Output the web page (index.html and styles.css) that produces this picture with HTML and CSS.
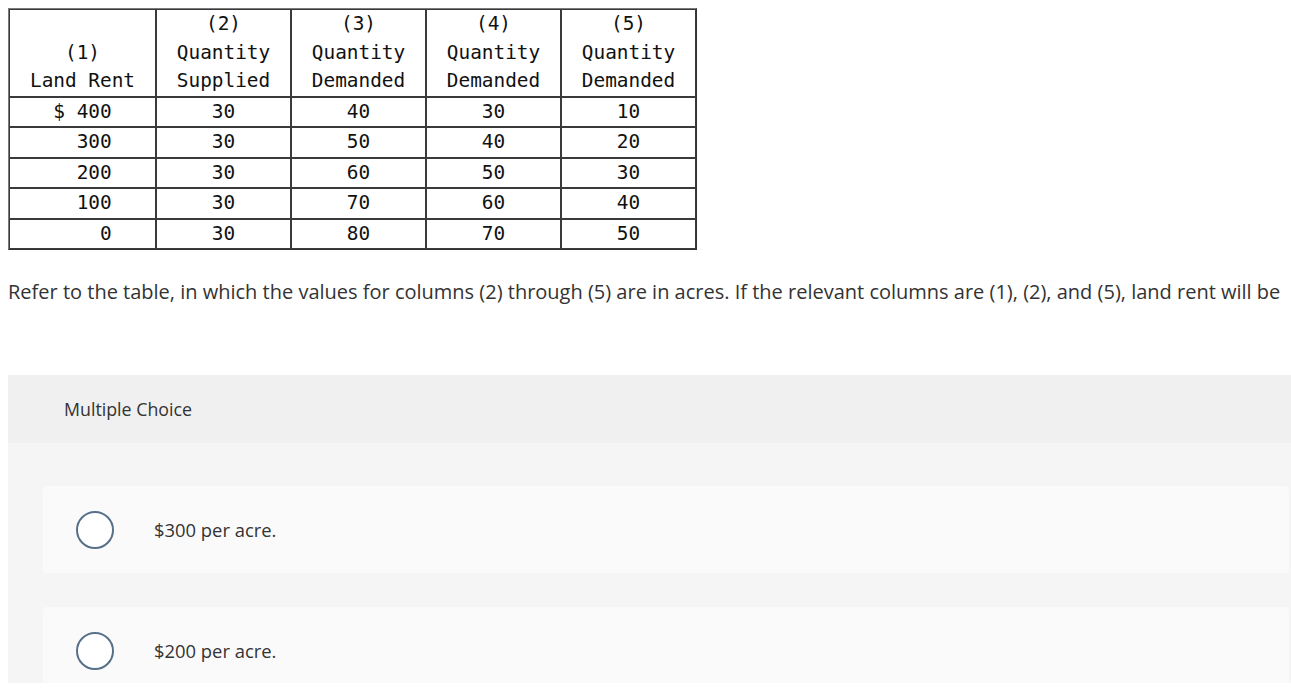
FILE: index.html
```html
<!DOCTYPE html>
<html>
<head>
<meta charset="utf-8">
<link rel="stylesheet" href="styles.css">
</head>
<body>
<table class="data">
  <tr class="head">
    <td class="c1"><br>(1)<br>Land Rent</td>
    <td class="cn">(2)<br>Quantity<br>Supplied</td>
    <td class="cn">(3)<br>Quantity<br>Demanded</td>
    <td class="cn">(4)<br>Quantity<br>Demanded</td>
    <td class="cn">(5)<br>Quantity<br>Demanded</td>
  </tr>
  <tr><td class="pre">$ 400</td><td>30</td><td>40</td><td>30</td><td>10</td></tr>
  <tr><td class="pre">  300</td><td>30</td><td>50</td><td>40</td><td>20</td></tr>
  <tr><td class="pre">  200</td><td>30</td><td>60</td><td>50</td><td>30</td></tr>
  <tr><td class="pre">  100</td><td>30</td><td>70</td><td>60</td><td>40</td></tr>
  <tr><td class="pre">    0</td><td>30</td><td>80</td><td>70</td><td>50</td></tr>
</table>

<p class="question">Refer to the table, in which the values for columns (2) through (5) are in acres. If the relevant columns are (1), (2), and (5), land rent will be</p>

<section class="mc">
  <div class="mc-head">Multiple Choice</div>
  <div class="mc-body">
    <div class="choice"><span class="radio"></span><span class="label">$300 per acre.</span></div>
    <div class="choice"><span class="radio"></span><span class="label">$200 per acre.</span></div>
  </div>
</section>
</body>
</html>
```

FILE: styles.css
```css
html, body {
  margin: 0;
  padding: 0;
  background: #ffffff;
}
body {
  padding: 8px 0 0 8px;
  font-family: "Open Sans", "Liberation Sans", sans-serif;
  color: #333333;
}
.data {
  border-collapse: separate;
  border-spacing: 0;
  border: 1px solid #7a7a7a;
  border-right-color: #333;
  border-bottom-color: #333;
  font-family: "DejaVu Sans Mono", "Liberation Mono", monospace;
  font-size: 19.4px;
  line-height: 28.5px;
  color: #111;
}
.data td {
  border: 1px solid #3a3a3a;
  padding: 0;
  text-align: center;
  width: 133px;
  vertical-align: middle;
}
.data td:first-child {
  width: 145px;
}
.data .pre {
  white-space: pre;
}
.question {
  margin: 30px 0 0 0;
  font-size: 20px;
  line-height: 24px;
  color: #333;
  letter-spacing: 0;
  white-space: nowrap;
}
.mc {
  margin-top: 71px;
}
.mc-head {
  background: #f0f0f0;
  height: 68px;
  padding-left: 56px;
  display: flex;
  align-items: center;
  font-size: 17.8px;
  color: #333;
}
.mc-body {
  background: #f5f5f5;
  padding: 43px 2px 0 35px;
  height: 197px;
  overflow: hidden;
  display: flex;
  flex-direction: column;
  gap: 34px;
}
.choice {
  background: #fafafa;
  border-radius: 4px;
  height: 87px;
  flex: none;
  display: flex;
  align-items: center;
  padding-left: 33px;
}
.radio {
  width: 34px;
  height: 34px;
  border: 2px solid #57708a;
  border-radius: 50%;
  background: #fff;
  flex: none;
}
.label {
  margin-left: 40px;
  font-size: 18.4px;
  color: #333;
}
```
